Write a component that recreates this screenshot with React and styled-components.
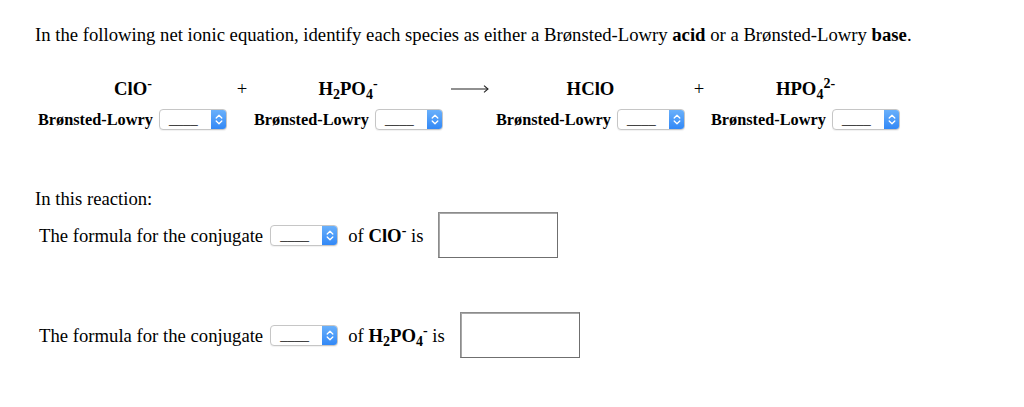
import React from "react";
import styled, { createGlobalStyle } from "styled-components";

const GlobalStyle = createGlobalStyle`
  html, body {
    margin: 0;
    padding: 0;
    background: #ffffff;
  }
  body {
    font-family: "Liberation Serif", "Times New Roman", serif;
    font-size: 18.7px;
    color: #000000;
  }
`;

const Page = styled.div`
  box-sizing: border-box;
  width: 1024px;
  height: 407px;
  padding: 24px 0 0 35px;
`;

const Intro = styled.p`
  margin: 0;
  line-height: 21px;
  white-space: nowrap;
`;

const Equation = styled.div`
  display: grid;
  grid-template-columns: 198px 18px 196px 46px 197px 18px 197px;
  grid-template-rows: 18px 21px;
  row-gap: 11px;
  align-items: center;
  margin-top: 35px;
`;

const Species = styled.div`
  font-weight: bold;
  line-height: 18px;
  text-align: center;
  white-space: nowrap;
  padding: 0 5px 0 3px;
`;

const Operator = styled.div`
  line-height: 18px;
  text-align: center;
`;

const Sub = styled.sub`
  font-size: 14px;
  line-height: 0;
  vertical-align: -4px;
`;

const Sup = styled.sup`
  font-size: 14px;
  line-height: 0;
  vertical-align: 7px;
`;

const ArrowCell = styled.div`
  display: flex;
  justify-content: center;
  align-items: center;
  height: 18px;
`;

const Choice = styled.div`
  display: flex;
  align-items: center;
  gap: 6px;
  padding-left: 3px;
`;

const Label = styled.span`
  font-size: 16.3px;
  font-weight: bold;
  line-height: 18px;
  white-space: nowrap;
`;

const SelectBox = styled.div`
  display: inline-flex;
  box-sizing: border-box;
  width: 68px;
  height: 21px;
  border: 1px solid #c6c6c6;
  border-radius: 4px;
  overflow: hidden;
  background: #ffffff;
  box-shadow: 0 1px 1px rgba(0, 0, 0, 0.06);
  flex: none;
`;

const SelectValue = styled.span`
  flex: 1;
  padding-left: 9px;
  font-family: "Liberation Sans", Arial, sans-serif;
  font-size: 13px;
  line-height: 17px;
  color: #2a2a2a;
`;

const SelectArrows = styled.span`
  display: flex;
  align-items: center;
  justify-content: center;
  width: 16px;
  margin: -1px -1px -1px 0;
  background: linear-gradient(#6cb2fb, #2f86f6);
`;

const Reaction = styled.p`
  margin: 58px 0 0;
  line-height: 21px;
`;

const Question = styled.div`
  display: flex;
  align-items: center;
  padding-left: 4px;
  margin-top: ${(p) => p.$gap}px;
`;

const Prompt = styled.span`
  line-height: 21px;
  white-space: nowrap;
  margin-right: 7px;
`;

const Tail = styled.span`
  line-height: 21px;
  white-space: nowrap;
  margin-left: 10px;
`;

const Formula = styled.b`
  font-weight: bold;
`;

const AnswerBox = styled.div`
  box-sizing: border-box;
  width: 120px;
  height: 46px;
  margin-left: 15px;
  border: 1px solid #6f6f6f;
  border-top-color: #8c8c8c;
  border-left-color: #8c8c8c;
  box-shadow: inset 1px 1px 0 #a8a8a8;
  background: #ffffff;
`;

function Chevrons() {
  return (
    <svg width="8" height="13" viewBox="0 0 8 13" aria-hidden="true">
      <path
        d="M1.2 5 L4 2.2 L6.8 5 M1.2 8 L4 10.8 L6.8 8"
        fill="none"
        stroke="#ffffff"
        strokeWidth="1.3"
        strokeLinecap="round"
        strokeLinejoin="round"
      />
    </svg>
  );
}

function Dropdown() {
  return (
    <SelectBox role="listbox">
      <SelectValue>____</SelectValue>
      <SelectArrows>
        <Chevrons />
      </SelectArrows>
    </SelectBox>
  );
}

function ReactionArrow() {
  return (
    <svg width="38" height="10" viewBox="0 0 38 10" aria-hidden="true">
      <path d="M0 5 H37" stroke="#222" strokeWidth="1.2" />
      <path d="M33 1.6 L37 5 L33 8.4" fill="none" stroke="#222" strokeWidth="1.1" />
    </svg>
  );
}

function BLChoice() {
  return (
    <Choice>
      <Label>Brønsted-Lowry</Label>
      <Dropdown />
    </Choice>
  );
}

export default function App() {
  return (
    <>
      <GlobalStyle />
      <Page>
        <Intro>
          In the following net ionic equation, identify each species as either a
          Brønsted-Lowry <b>acid</b> or a Brønsted-Lowry <b>base</b>.
        </Intro>

        <Equation>
          <Species>
            ClO<Sup>-</Sup>
          </Species>
          <Operator>+</Operator>
          <Species>
            H<Sub>2</Sub>PO<Sub>4</Sub>
            <Sup>-</Sup>
          </Species>
          <ArrowCell>
            <ReactionArrow />
          </ArrowCell>
          <Species>HClO</Species>
          <Operator>+</Operator>
          <Species>
            HPO<Sub>4</Sub>
            <Sup>2-</Sup>
          </Species>

          <BLChoice />
          <div />
          <BLChoice />
          <div />
          <BLChoice />
          <div />
          <BLChoice />
        </Equation>

        <Reaction>In this reaction:</Reaction>

        <Question $gap={3}>
          <Prompt>The formula for the conjugate</Prompt>
          <Dropdown />
          <Tail>
            of{" "}
            <Formula>
              ClO<Sup>-</Sup>
            </Formula>{" "}
            is
          </Tail>
          <AnswerBox />
        </Question>

        <Question $gap={54}>
          <Prompt>The formula for the conjugate</Prompt>
          <Dropdown />
          <Tail>
            of{" "}
            <Formula>
              H<Sub>2</Sub>PO<Sub>4</Sub>
              <Sup>-</Sup>
            </Formula>{" "}
            is
          </Tail>
          <AnswerBox />
        </Question>
      </Page>
    </>
  );
}
